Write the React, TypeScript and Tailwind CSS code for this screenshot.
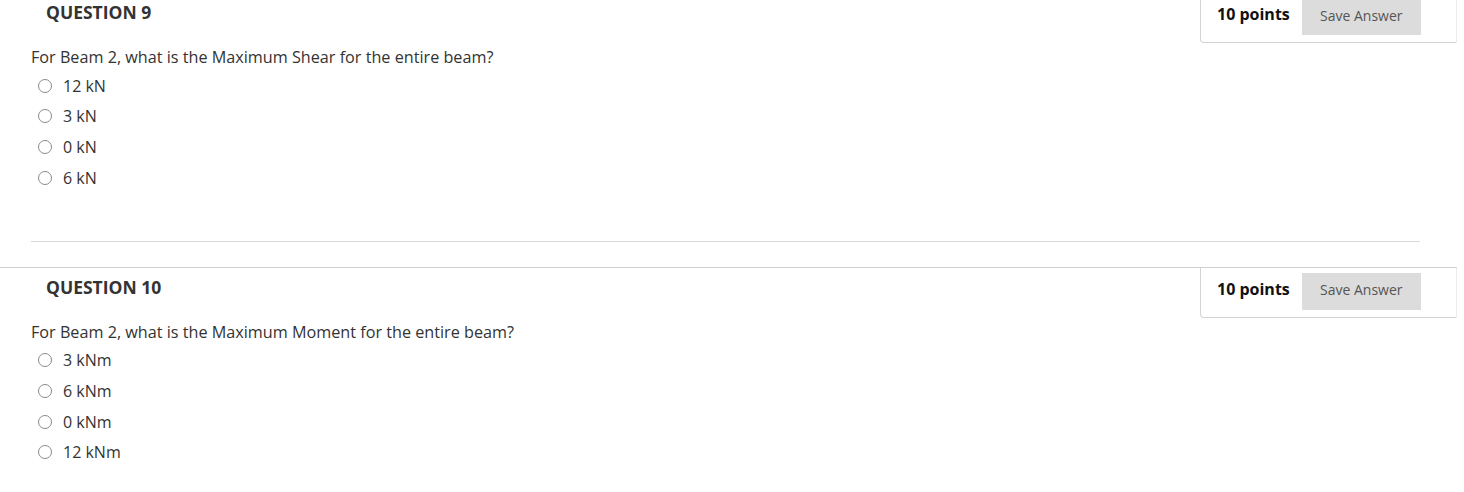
import React from 'react';

interface Question {
  number: number;
  points: number;
  text: string;
  options: string[];
}

const questions: Question[] = [
  {
    number: 9,
    points: 10,
    text: 'For Beam 2, what is the Maximum Shear for the entire beam?',
    options: ['12 kN', '3 kN', '0 kN', '6 kN'],
  },
  {
    number: 10,
    points: 10,
    text: 'For Beam 2, what is the Maximum Moment for the entire beam?',
    options: ['3 kNm', '6 kNm', '0 kNm', '12 kNm'],
  },
];

const QuestionBlock: React.FC<{ q: Question }> = ({ q }) => {
  return (
    <div className="border-t border-[#cfcfcf]">
      {/* Header */}
      <div className="flex justify-between">
        <h2 className="pl-[46px] pt-[7px] text-[17.5px] leading-[24px] font-bold text-[#333]">
          QUESTION {q.number}
        </h2>
        <div className="flex h-[50px] w-[257px] items-start border-b border-l border-r border-b-[#d4d4d4] border-l-[#d4d4d4] border-r-[#ececec] rounded-bl-[4px] pl-4 pt-[5px]">
          <span className="h-[37px] leading-[37px] text-[16px] font-bold text-[#111] -translate-y-[2px]">
            {q.points} points
          </span>
          <button className="ml-3 h-[37px] w-[119px] bg-[#dcdcdc] pb-[3px] text-[14px] text-[#555]">
            Save Answer
          </button>
        </div>
      </div>

      {/* Question text */}
      <p className="mt-[2px] pl-[31px] text-[16.2px] leading-[24px] text-[#333]">{q.text}</p>

      {/* Options */}
      <div className="mt-[1.5px] pl-[38px]">
        {q.options.map((opt) => (
          <label key={opt} className="flex h-[30.66px] items-center text-[16px] text-[#333]">
            <span className="h-[14px] w-[14px] rounded-full border border-[#8a8a8a] bg-white" />
            <span className="ml-[11px]">{opt}</span>
          </label>
        ))}
      </div>

      <div className="mx-[31px] mt-[47.5px] mb-[25px] w-[1389px] border-t border-[#dadada]" />
    </div>
  );
};

export default function App() {
  return (
    <div
      className="h-[492px] w-[1464px] overflow-hidden bg-white"
      style={{ fontFamily: '"Open Sans", "Noto Sans", sans-serif' }}
    >
      <div className="-mt-[8px] w-[1457px]">
        {questions.map((q) => (
          <QuestionBlock key={q.number} q={q} />
        ))}
      </div>
    </div>
  );
}
